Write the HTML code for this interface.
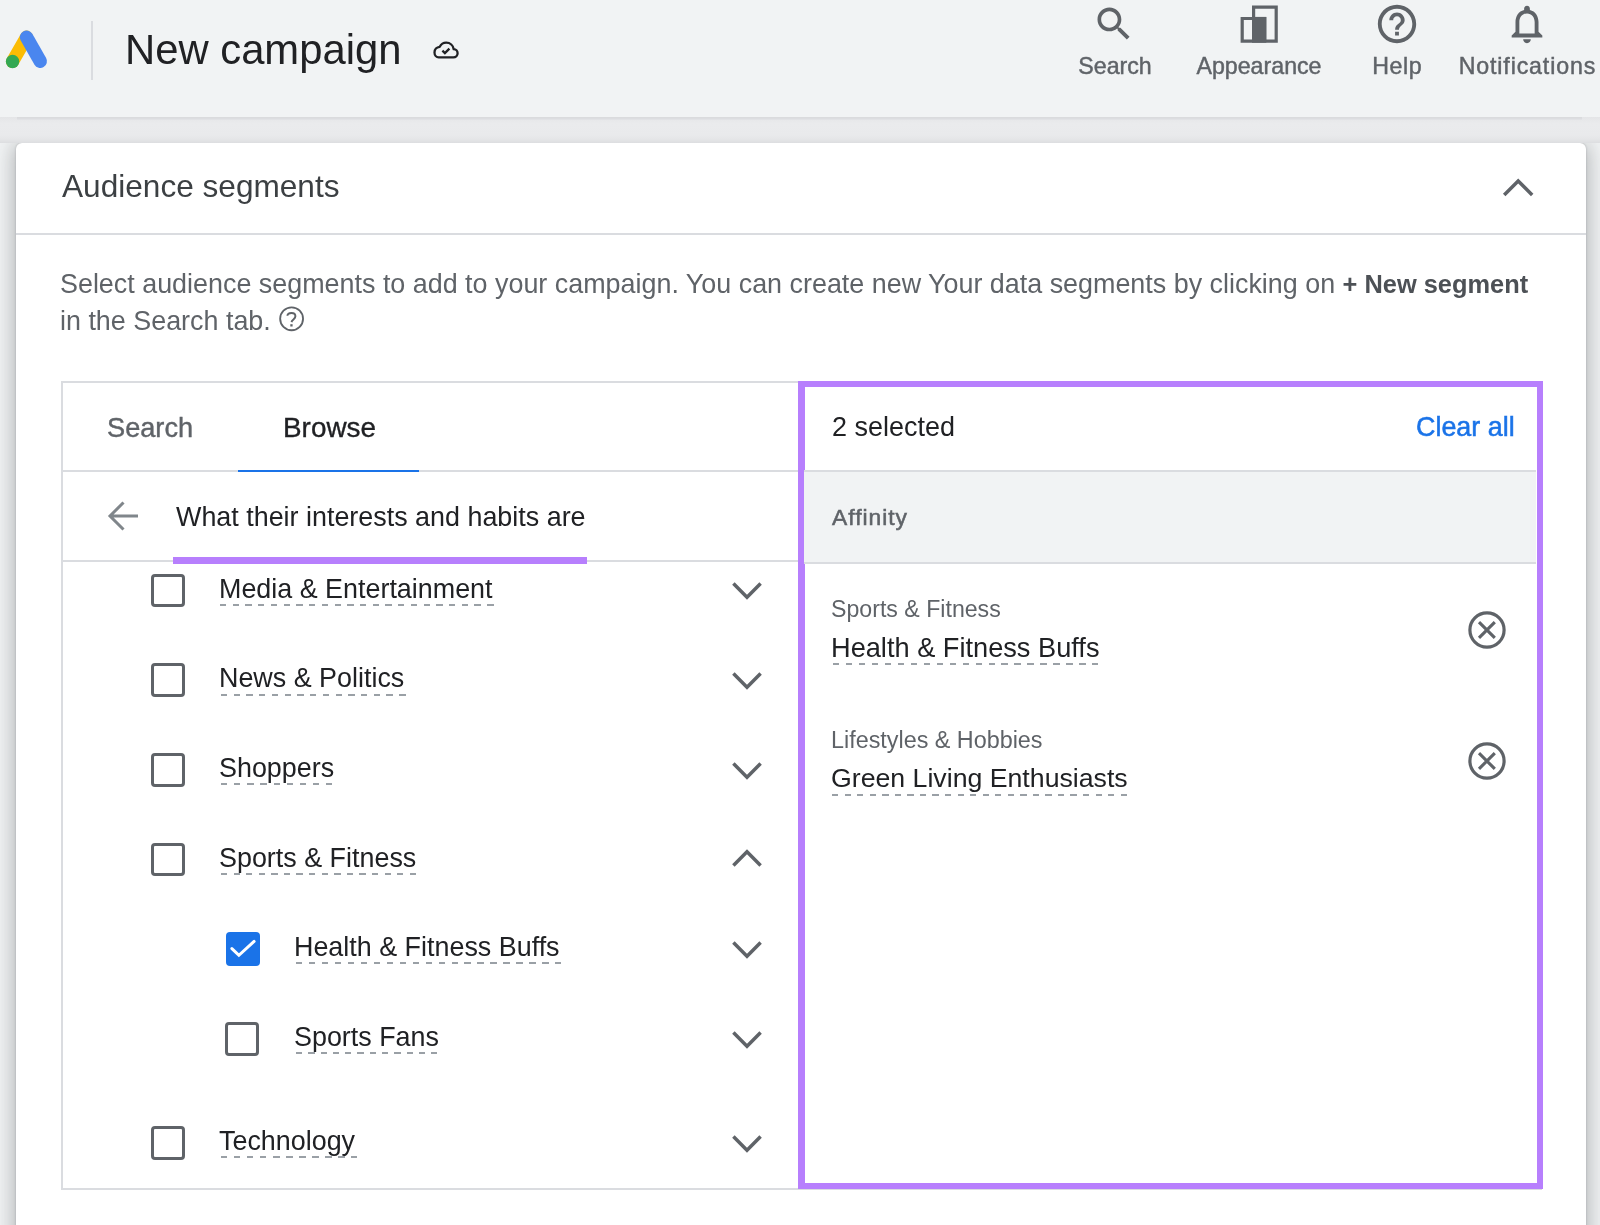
<!DOCTYPE html>
<html><head><meta charset="utf-8">
<style>
*{margin:0;padding:0;box-sizing:border-box}
html,body{width:1600px;height:1225px;overflow:hidden;background:#f1f3f4;font-family:"Liberation Sans",sans-serif;font-variant-ligatures:none;font-feature-settings:"liga" 0,"clig" 0}
.a{position:absolute}
.t{position:absolute;white-space:nowrap;line-height:1;will-change:transform}
#band{left:0;top:117px;width:1600px;height:26px;background:linear-gradient(to bottom,#e4e5e7 0px,#e8e9eb 4px,#eaebed 7px,#e9eaec 18px,#e5e6e8 22px,#dfe0e2 25px,#dcdde0 26px)}
#bline{left:17px;top:117px;width:1565px;height:3px;background:linear-gradient(to bottom,#d9dadc 0px,#dcdde0 1.5px,#e4e5e7 3px)}
#bl{left:0;top:117px;width:17px;height:30px;background:linear-gradient(to right,#eeeff1,#e7e8ea)}
#lsh{left:0;top:147px;width:16px;height:1078px;background:linear-gradient(to right,#e8e9eb 0px,#e4e5e7 3px,#dedfe1 6px,#d9dadc 9px,#d4d5d7 12px,#cbcccf 15px,#c6c7c9 16px)}
#rsh{left:1586px;top:143px;width:14px;height:1082px;background:linear-gradient(to right,#c4c5c7 0px,#ced0d2 1.5px,#d3d4d6 4px,#d9dadc 7px,#dcdde0 10px,#e2e3e5 14px)}
#card{left:16px;top:143px;width:1570px;height:1200px;background:#fff;border-radius:6px;box-shadow:0 0 2px 0 rgba(40,44,48,.25),0 3px 20px 3px rgba(40,44,48,.30)}
.gray{color:#5f6368}
.dark{color:#202124}
.dash{position:absolute;height:2px;background:repeating-linear-gradient(to right,#9aa0a6 0,#9aa0a6 6.3px,transparent 6.3px,transparent 12.7px)}
.cb{position:absolute;width:33.5px;height:33.6px;border:3.3px solid #5f6368;border-radius:4px}
</style></head><body>
<svg class="a" style="left:0;top:0" width="60" height="80" viewBox="0 0 60 80">
  <line x1="12.55" y1="61.45" x2="26.5" y2="37.2" stroke="#fbbc04" stroke-width="13.2" stroke-linecap="round"/>
  <line x1="26.5" y1="37.2" x2="40.3" y2="61.3" stroke="#4a86ef" stroke-width="13.4" stroke-linecap="round"/>
  <circle cx="12.55" cy="61.45" r="6.7" fill="#34a853"/>
</svg>
<div class="a" style="left:90.5px;top:20.5px;width:2px;height:59px;background:#dadce0"></div>
<div class="t dark" id="t_newc" style="left:124.8px;top:29.01px;font-size:41.8px">New campaign</div>
<svg class="a" style="left:432px;top:38px" width="28" height="24" viewBox="0 0 28 24"><path fill="none" stroke="#202124" stroke-width="2.3" stroke-linejoin="round" d="M6.6 19.3H21.3C23.9 19.3 25.6 17.5 25.6 15.2C25.6 13 23.9 11.3 21.7 11.2C21.1 7.6 18.2 4.7 14.2 4.7C11.3 4.7 9 6.3 7.7 8.8C4.6 9.1 2.5 11.5 2.5 14.4C2.5 17.2 4.5 19.3 6.6 19.3Z"/><path fill="none" stroke="#202124" stroke-width="2.3" d="M10.4 12.6L12.9 15.1L17.4 10.6"/></svg>
<svg class="a" style="left:1092px;top:2px" width="44" height="44" viewBox="0 0 24 24"><path fill="#5f6368" d="M15.5 14h-.79l-.28-.27C15.41 12.59 16 11.11 16 9.5 16 5.91 13.09 3 9.5 3S3 5.91 3 9.5 5.91 16 9.5 16c1.61 0 3.09-.59 4.23-1.57l.27.28v.79l5 4.99L20.49 19l-4.99-5zm-6 0C7.01 14 5 11.99 5 9.5S7.01 5 9.5 5 14 7.01 14 9.5 11.99 14 9.5 14z"/></svg>
<svg class="a" style="left:1240px;top:5px" width="38" height="38" viewBox="0 0 38 38">
  <path fill="none" stroke="#5f6368" stroke-width="3.2" d="M2.2 13.5H24.7V36.1H2.2Z M13.6 2.1H36.2V36.1H13.6Z"/>
  <rect x="12" y="11.9" width="14.3" height="25.8" fill="#5f6368"/>
</svg>
<svg class="a" style="left:1374px;top:1px" width="46" height="46" viewBox="0 0 24 24"><path fill="#5f6368" d="M11 18h2v-2h-2v2zm1-16C6.48 2 2 6.480 2 12s4.48 10 10 10 10-4.48 10-10S17.52 2 12 2zm0 18c-4.41 0-8-3.59-8-8s3.59-8 8-8 8 3.59 8 8-3.59 8-8 8zm0-14c-2.21 0-4 1.79-4 4h2c0-1.1.9-2 2-2s2 .9 2 2c0 2-3 1.75-3 5h2c0-2.25 3-2.5 3-5 0-2.21-1.79-4-4-4z"/></svg>
<svg class="a" style="left:1504px;top:1px" width="46" height="46" viewBox="0 0 24 24"><path fill="#5f6368" d="M12 22c1.1 0 2-.9 2-2h-4c0 1.1.89 2 2 2zm6-6v-5c0-3.07-1.64-5.64-4.5-6.32V4c0-.83-.67-1.5-1.5-1.5s-1.5.67-1.5 1.5v.68C7.630 5.36 6 7.92 6 11v5l-2 2v1h16v-1l-2-2zm-2 1H8v-6c0-2.48 1.51-4.5 4-4.5s4 2.02 4 4.5v6z"/></svg>
<div class="t gray" style="left:1014.5999999999999px;top:55.46px;font-size:23.2px;width:200px;text-align:center;letter-spacing:0px;text-indent:0px;-webkit-text-stroke:0.45px #5f6368">Search</div>
<div class="t gray" style="left:1159px;top:55.46px;font-size:23.2px;width:200px;text-align:center;letter-spacing:0px;text-indent:0px;-webkit-text-stroke:0.45px #5f6368">Appearance</div>
<div class="t gray" style="left:1296.75px;top:55.46px;font-size:23.2px;width:200px;text-align:center;letter-spacing:0.6px;text-indent:0.6px;-webkit-text-stroke:0.45px #5f6368">Help</div>
<div class="t gray" style="left:1427.2px;top:55.46px;font-size:23.2px;width:200px;text-align:center;letter-spacing:0.85px;text-indent:0.85px;-webkit-text-stroke:0.45px #5f6368">Notifications</div>
<div class="a" id="card"></div>
<div class="a" id="band"></div>
<div class="a" id="bline"></div>
<div class="t" id="t_aud" style="left:61.5px;top:171.44px;font-size:31.6px;color:#3c4043">Audience segments</div>
<svg class="a" style="left:1500px;top:174px" width="36" height="26" viewBox="0 0 36 26"><polyline points="4.2,20.9 18.2,6.9 32.2,20.9" fill="none" stroke="#5f6368" stroke-width="3.5"/></svg>
<div class="a" style="left:16px;top:233px;width:1570px;height:1.6px;background:#dadce0"></div>
<div class="t gray" id="t_desc1" style="left:60px;top:270.82px;font-size:26.9px">Select audience segments to add to your campaign. You can create new Your data segments by clicking on <b style="color:#4d5156;font-size:25.4px">+ New segment</b></div>
<div class="t gray" id="t_desc2" style="left:60px;top:308.32px;font-size:26.9px">in the Search tab.</div>
<svg class="a" style="left:279px;top:306px" width="26" height="26" viewBox="0 0 26 26"><circle cx="12.6" cy="12.75" r="11.45" fill="none" stroke="#5f6368" stroke-width="1.85"/><path d="M8.4 9.8C8.5 8 10.3 6.9 12.5 6.9C14.8 6.9 16.4 8.3 16.4 10.3C16.4 12.6 14 13.3 13 14.9L12.5 16.2" fill="none" stroke="#5f6368" stroke-width="1.95"/><rect x="11.3" y="18.2" width="2.3" height="2.3" fill="#5f6368"/></svg>
<div class="a" style="left:61px;top:381px;width:1481px;height:809px;border:2px solid #dadce0"></div>
<div class="t gray" id="t_tsearch" style="left:107px;top:413.97px;font-size:27.2px;-webkit-text-stroke:0.4px #5f6368">Search</div>
<div class="t dark" id="t_tbrowse" style="left:282.5px;top:413.88px;font-size:27.9px;-webkit-text-stroke:0.35px #202124">Browse</div>
<div class="a" style="left:63px;top:470px;width:735px;height:2px;background:#dadce0"></div>
<div class="a" style="left:238px;top:470px;width:181px;height:2px;background:#1a73e8"></div>
<svg class="a" style="left:104px;top:497px" width="38" height="38" viewBox="0 0 38 38"><path fill="none" stroke="#80868b" stroke-width="3" d="M34 19H7 M19.5 5.5L6 19L19.5 32.5"/></svg>
<div class="t dark" id="t_what" style="left:176px;top:503.92px;font-size:26.9px">What their interests and habits are</div>
<div class="a" style="left:63px;top:560px;width:735px;height:2px;background:#dadce0"></div>
<div class="a" style="left:173px;top:557px;width:414px;height:6.5px;background:#b77ffd"></div>
<div class="cb" style="left:151px;top:573.5px"></div>
<div class="t dark" id="r0" style="left:219.3px;top:576.02px;font-size:26.9px">Media &amp; Entertainment</div>
<div class="a" style="left:220px;top:604.1px;width:273.5px;height:2px;background:repeating-linear-gradient(to right,#9aa0a6 0,#9aa0a6 6.3px,transparent 6.3px,transparent 12.724px)"></div>
<svg class="a" style="left:729.4px;top:578.3px" width="36" height="26" viewBox="0 0 36 26"><polyline points="4.4,5.6 18,19.2 31.6,5.6" fill="none" stroke="#5f6368" stroke-width="3.5"/></svg>
<div class="cb" style="left:151px;top:663.2px"></div>
<div class="t dark" id="r1" style="left:219.3px;top:665.42px;font-size:26.9px">News &amp; Politics</div>
<div class="a" style="left:221px;top:693.5px;width:184.5px;height:2px;background:repeating-linear-gradient(to right,#9aa0a6 0,#9aa0a6 6.3px,transparent 6.3px,transparent 12.729px)"></div>
<svg class="a" style="left:729.4px;top:668.0px" width="36" height="26" viewBox="0 0 36 26"><polyline points="4.4,5.6 18,19.2 31.6,5.6" fill="none" stroke="#5f6368" stroke-width="3.5"/></svg>
<div class="cb" style="left:151px;top:753.0px"></div>
<div class="t dark" id="r2" style="left:219.3px;top:755.12px;font-size:26.9px">Shoppers</div>
<div class="a" style="left:221px;top:783.2px;width:111.5px;height:2px;background:repeating-linear-gradient(to right,#9aa0a6 0,#9aa0a6 6.3px,transparent 6.3px,transparent 13.15px)"></div>
<svg class="a" style="left:729.4px;top:757.8px" width="36" height="26" viewBox="0 0 36 26"><polyline points="4.4,5.6 18,19.2 31.6,5.6" fill="none" stroke="#5f6368" stroke-width="3.5"/></svg>
<div class="cb" style="left:151px;top:842.8px"></div>
<div class="t dark" id="r3" style="left:219.3px;top:844.52px;font-size:26.9px">Sports &amp; Fitness</div>
<div class="a" style="left:221px;top:872.6px;width:195px;height:2px;background:repeating-linear-gradient(to right,#9aa0a6 0,#9aa0a6 6.3px,transparent 6.3px,transparent 12.58px)"></div>
<svg class="a" style="left:729.4px;top:845.4px" width="36" height="26" viewBox="0 0 36 26"><polyline points="4.4,20.4 18,6.8 31.6,20.4" fill="none" stroke="#5f6368" stroke-width="3.5"/></svg>
<div class="a" style="left:225.7px;top:932.0px;width:34px;height:34px;border-radius:4px;background:#1a73e8"></div>
<svg class="a" style="left:225.7px;top:932.0px" width="34" height="34" viewBox="0 0 34 34"><polyline points="5.9,16.6 12.9,23.3 28.1,9.4" fill="none" stroke="#fff" stroke-width="3" stroke-linecap="round"/></svg>
<div class="t dark" id="r4" style="left:293.8px;top:934.22px;font-size:26.9px">Health &amp; Fitness Buffs</div>
<div class="a" style="left:295.5px;top:962.3px;width:265.5px;height:2px;background:repeating-linear-gradient(to right,#9aa0a6 0,#9aa0a6 6.3px,transparent 6.3px,transparent 12.96px)"></div>
<svg class="a" style="left:729.4px;top:936.8px" width="36" height="26" viewBox="0 0 36 26"><polyline points="4.4,5.6 18,19.2 31.6,5.6" fill="none" stroke="#5f6368" stroke-width="3.5"/></svg>
<div class="cb" style="left:225.4px;top:1022.0px"></div>
<div class="t dark" id="r5" style="left:293.8px;top:1024.22px;font-size:26.9px">Sports Fans</div>
<div class="a" style="left:295.5px;top:1052.3px;width:141.5px;height:2px;background:repeating-linear-gradient(to right,#9aa0a6 0,#9aa0a6 6.3px,transparent 6.3px,transparent 12.291px)"></div>
<svg class="a" style="left:729.4px;top:1026.8px" width="36" height="26" viewBox="0 0 36 26"><polyline points="4.4,5.6 18,19.2 31.6,5.6" fill="none" stroke="#5f6368" stroke-width="3.5"/></svg>
<div class="cb" style="left:151px;top:1126.4px"></div>
<div class="t dark" id="r6" style="left:219.0px;top:1128.22px;font-size:26.9px">Technology</div>
<div class="a" style="left:220.7px;top:1156.3px;width:136.8px;height:2px;background:repeating-linear-gradient(to right,#9aa0a6 0,#9aa0a6 6.3px,transparent 6.3px,transparent 13.05px)"></div>
<svg class="a" style="left:729.4px;top:1131.2px" width="36" height="26" viewBox="0 0 36 26"><polyline points="4.4,5.6 18,19.2 31.6,5.6" fill="none" stroke="#5f6368" stroke-width="3.5"/></svg>
<div class="a" style="left:798px;top:381px;width:744.5px;height:808px;border:6.3px solid #b77ffd;border-left-width:7px;background:#fff"></div>
<div class="t dark" id="t_sel" style="left:832px;top:414.17px;font-size:26.96px">2 selected</div>
<div class="t" id="t_clear" style="left:1416.3px;top:414.42px;font-size:26.9px;color:#1a73e8;-webkit-text-stroke:0.5px #1a73e8">Clear all</div>
<div class="a" style="left:804.3px;top:470px;width:731.7px;height:2px;background:#dadce0"></div>
<div class="a" style="left:804.3px;top:472px;width:731.7px;height:90px;background:#f1f3f4"></div>
<div class="a" style="left:804.3px;top:562px;width:731.7px;height:2px;background:#dadce0"></div>
<div class="t gray" id="t_aff" style="left:832.3px;top:506.0px;font-size:22.8px;letter-spacing:1.0px;-webkit-text-stroke:0.55px #5f6368">Affinity</div>
<div class="t gray" id="t_sf" style="left:831px;top:597.9px;font-size:23.15px">Sports &amp; Fitness</div>
<div class="t dark" id="t_hfb" style="left:831px;top:634.07px;font-size:27.2px">Health &amp; Fitness Buffs</div>
<div class="a" style="left:832.5px;top:662.8px;width:265.5px;height:2px;background:repeating-linear-gradient(to right,#9aa0a6 0,#9aa0a6 6.3px,transparent 6.3px,transparent 12.96px)"></div>
<svg class="a" style="left:1466.5px;top:610px" width="40" height="40" viewBox="0 0 40 40"><circle cx="20" cy="20" r="17.1" fill="none" stroke="#5f6368" stroke-width="3.2"/><path d="M12.0 12.1L27.8 27.9M27.8 12.1L12.0 27.9" stroke="#5f6368" stroke-width="3.1"/></svg>
<div class="t gray" id="t_lh" style="left:831px;top:728.83px;font-size:23.35px">Lifestyles &amp; Hobbies</div>
<div class="t dark" id="t_gle" style="left:831px;top:765.39px;font-size:26.7px">Green Living Enthusiasts</div>
<div class="a" style="left:832px;top:793.7px;width:295px;height:2px;background:repeating-linear-gradient(to right,#9aa0a6 0,#9aa0a6 6.3px,transparent 6.3px,transparent 12.552px)"></div>
<svg class="a" style="left:1466.5px;top:740.75px" width="40" height="40" viewBox="0 0 40 40"><circle cx="20" cy="20" r="17.1" fill="none" stroke="#5f6368" stroke-width="3.2"/><path d="M12.0 12.1L27.8 27.9M27.8 12.1L12.0 27.9" stroke="#5f6368" stroke-width="3.1"/></svg>
</body></html>
